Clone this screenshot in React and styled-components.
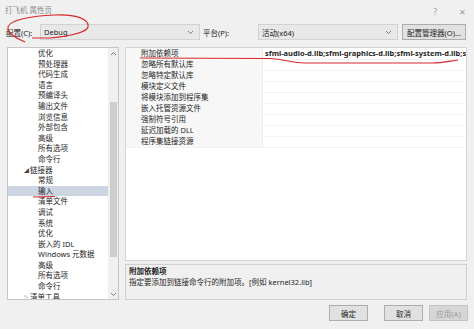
import React from 'react';
import styled, { createGlobalStyle } from 'styled-components';

const GlobalStyle = createGlobalStyle`
    html, body {
        margin: 0;
        padding: 0;
        background: #f0f0f0;
    }
    body {
        font-family: "Noto Sans", "Noto Sans CJK SC", sans-serif;
        font-size: 7.5px;
        color: #1e1e1e;
    }
`

const treeItems = [
    { text: "优化", level: 2 },
    { text: "预处理器", level: 2 },
    { text: "代码生成", level: 2 },
    { text: "语言", level: 2 },
    { text: "预编译头", level: 2 },
    { text: "输出文件", level: 2 },
    { text: "浏览信息", level: 2 },
    { text: "外部包含", level: 2 },
    { text: "高级", level: 2 },
    { text: "所有选项", level: 2 },
    { text: "命令行", level: 2 },
    { text: "链接器", level: 1, arrow: "open" },
    { text: "常规", level: 2 },
    { text: "输入", level: 2, selected: true },
    { text: "清单文件", level: 2 },
    { text: "调试", level: 2 },
    { text: "系统", level: 2 },
    { text: "优化", level: 2 },
    { text: "嵌入的 IDL", level: 2 },
    { text: "Windows 元数据", level: 2 },
    { text: "高级", level: 2 },
    { text: "所有选项", level: 2 },
    { text: "命令行", level: 2 },
    { text: "清单工具", level: 1, arrow: "closed" },
];

const properties = [
    { name: "附加依赖项", value: "sfml-audio-d.lib;sfml-graphics-d.lib;sfml-system-d.lib;sfml-window-d.lib;%(AdditionalDependencies)" },
    { name: "忽略所有默认库", value: "" },
    { name: "忽略特定默认库", value: "" },
    { name: "模块定义文件", value: "" },
    { name: "将模块添加到程序集", value: "" },
    { name: "嵌入托管资源文件", value: "" },
    { name: "强制符号引用", value: "" },
    { name: "延迟加载的 DLL", value: "" },
    { name: "程序集链接资源", value: "" },
];

function Chevron({ up }) {
    return (
        <svg width="7" height="5" viewBox="0 0 7 5">
            <path d={up ? "M1 4 L3.5 1.5 L6 4" : "M1 1 L3.5 3.5 L6 1"} fill="none" stroke="#707070" strokeWidth="0.9" />
        </svg>
    );
}

function Combo({ width, text }) {
    return (
        <ComboBox width={width}>
            <span>{text}</span>
            <Chevron />
        </ComboBox>
    );
}

function App() {
    return (
        <Window>
            <GlobalStyle />
            <TitleBar>
                <Title>打飞机 属性页</Title>
                <TitleButtons>
                    <span>?</span>
                    <span>✕</span>
                </TitleButtons>
            </TitleBar>

            <ConfigRow>
                <Label width={34}>配置(C):</Label>
                <Combo width={160} text="Debug" />
                <Label width={55} style={{ marginLeft: 3 }}>平台(P):</Label>
                <Combo width={140} text="活动(x64)" />
                <Button width={64} style={{ marginLeft: 4 }}>配置管理器(O)...</Button>
            </ConfigRow>

            <Body>
                <Tree>
                    <TreeList>
                        {treeItems.map((item, i) => (
                            <TreeItem key={i} level={item.level} selected={item.selected}>
                                {item.arrow && <Arrow>{item.arrow === "open" ? "◢" : "▷"}</Arrow>}
                                {item.text}
                            </TreeItem>
                        ))}
                    </TreeList>
                    <Scrollbar>
                        <ScrollArrow><Chevron up /></ScrollArrow>
                        <ScrollTrack>
                            <ScrollThumb />
                        </ScrollTrack>
                        <ScrollArrow><Chevron /></ScrollArrow>
                    </Scrollbar>
                </Tree>

                <RightPane>
                    <Grid>
                        {properties.map((p, i) => (
                            <GridRow key={i}>
                                <NameCell>{p.name}</NameCell>
                                <ValueCell>{p.value}</ValueCell>
                            </GridRow>
                        ))}
                    </Grid>
                    <Description>
                        <DescTitle>附加依赖项</DescTitle>
                        <DescText>指定要添加到链接命令行的附加项。[例如 kernel32.lib]</DescText>
                    </Description>
                </RightPane>
            </Body>

            <Footer>
                <Button width={39}>确定</Button>
                <Button width={39} style={{ marginLeft: 16 }}>取消</Button>
                <Button width={39} disabled style={{ marginLeft: 6 }}>应用(A)</Button>
            </Footer>

            {/* red pen marks drawn over the screenshot */}
            <Marks width="474" height="329" viewBox="0 0 474 329">
                <path d="M25 42 C18 39, 7 34, 8 27 C10 20, 30 16, 55 15 C75 14, 90 19, 88 27 C86 33, 70 36, 50 38 L32 38"
                    fill="none" stroke="#d9262a" strokeWidth="1.1" />
                <path d="M140 58 L270 58.5 C285 59, 290 63, 305 63 L432 63 C442 63, 450 61, 458 60"
                    fill="none" stroke="#d9262a" strokeWidth="1.1" />
                <path d="M33 197 L55 196.5" fill="none" stroke="#d9262a" strokeWidth="1.1" />
            </Marks>
        </Window>
    );
}

const Window = styled.div`
    position: relative;
    width: 474px;
    height: 329px;
    background: #f0f0f0;
    display: flex;
    flex-direction: column;
    overflow: hidden;
`
const TitleBar = styled.div`
    height: 18px;
    display: flex;
    align-items: center;
    justify-content: space-between;
    padding: 0 8px 0 5px;
`
const Title = styled.div`
    color: #8a8a8a;
    font-size: 7.5px;
`
const TitleButtons = styled.div`
    display: flex;
    gap: 22px;
    color: #9a9a9a;
    font-size: 8px;
    margin-top: 5px;
`
const ConfigRow = styled.div`
    display: flex;
    align-items: center;
    height: 16px;
    margin-top: 6px;
    padding-left: 6px;
`
const Label = styled.div`
    width: ${p => p.width}px;
    white-space: nowrap;
`
const ComboBox = styled.div`
    width: ${p => p.width}px;
    height: 16px;
    box-sizing: border-box;
    border: 1px solid #d2d2d2;
    background: #e8e8e8;
    display: flex;
    align-items: center;
    justify-content: space-between;
    padding: 0 5px 0 3px;
`
const Button = styled.div`
    width: ${p => p.width}px;
    height: 16px;
    box-sizing: border-box;
    border: 1px solid ${p => p.disabled ? "#c4c4c4" : "#adadad"};
    background: ${p => p.disabled ? "#d6d6d6" : "#e1e1e1"};
    color: ${p => p.disabled ? "#9c9c9c" : "#1e1e1e"};
    display: flex;
    align-items: center;
    justify-content: center;
    white-space: nowrap;
`
const Body = styled.div`
    display: flex;
    gap: 6px;
    height: 253px;
    margin-top: 7px;
    padding: 0 7px;
`
const Tree = styled.div`
    width: 112px;
    box-sizing: border-box;
    border: 1px solid #c6c6c6;
    background: #fff;
    display: flex;
    overflow: hidden;
`
const TreeList = styled.div`
    flex: 1;
    overflow: hidden;
`
const TreeItem = styled.div`
    height: 10.6px;
    line-height: 10.6px;
    padding-left: ${p => p.level === 2 ? 30 : 16}px;
    background: ${p => p.selected ? "#cdd4e2" : "transparent"};
    white-space: nowrap;
    display: flex;
    align-items: center;
`
const Arrow = styled.span`
    width: 6px;
    font-size: 5px;
    color: #444;
    margin-right: 0px;
`
const Scrollbar = styled.div`
    width: 10px;
    background: #f0f0f0;
    display: flex;
    flex-direction: column;
`
const ScrollArrow = styled.div`
    height: 10px;
    display: flex;
    align-items: center;
    justify-content: center;
`
const ScrollTrack = styled.div`
    flex: 1;
    padding: 0 1.5px;
    display: flex;
    flex-direction: column;
`
const ScrollThumb = styled.div`
    margin-top: 44px;
    height: 155px;
    background: #cdcdcd;
`
const RightPane = styled.div`
    flex: 1;
    display: flex;
    flex-direction: column;
    gap: 3px;
    min-width: 0;
`
const Grid = styled.div`
    flex: 1;
    box-sizing: border-box;
    border: 1px solid #d4d4d4;
    background: #fff;
    overflow: hidden;
`
const GridRow = styled.div`
    display: grid;
    grid-template-columns: 137px 1fr;
    height: 11px;
    line-height: 11px;
`
const NameCell = styled.div`
    background: #f7f7f7;
    padding-left: 15px;
    border-right: 1px solid #ececec;
    border-bottom: 1px solid #f2f2f2;
    white-space: nowrap;
`
const ValueCell = styled.div`
    padding-left: 2px;
    font-weight: bold;
    white-space: nowrap;
    overflow: hidden;
    border-bottom: 1px solid #f4f4f4;
`
const Description = styled.div`
    height: 36px;
    box-sizing: border-box;
    border: 1px solid #d0d0d0;
    background: #f0f0f0;
    padding: 1px 3px;
`
const DescTitle = styled.div`
    font-weight: bold;
    line-height: 11px;
`
const DescText = styled.div`
    line-height: 11px;
`
const Footer = styled.div`
    display: flex;
    justify-content: flex-end;
    margin-top: 5px;
    padding-right: 6px;
`
const Marks = styled.svg`
    position: absolute;
    left: 0;
    top: 0;
    pointer-events: none;
`

export default App;
